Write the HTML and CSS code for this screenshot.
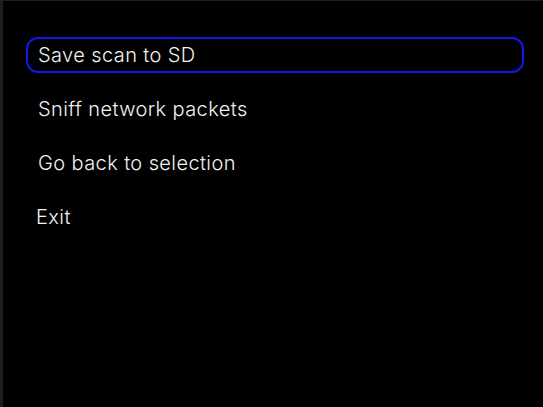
FILE: index.html
```html
<!DOCTYPE html>
<html lang="en">
<head>
    <meta charset="UTF-8">
    <meta name="viewport" content="width=device-width, initial-scale=1.0">
    <title>Scan Menu</title>
    <link rel="stylesheet" href="styles.css">
</head>
<body>
    <div class="screen">
        <ul class="menu">
            <li class="menu-item selected">Save scan to SD</li>
            <li class="menu-item">Sniff network packets</li>
            <li class="menu-item">Go back to selection</li>
            <li class="menu-item exit">Exit</li>
        </ul>
    </div>
</body>
</html>
```
FILE: styles.css
```css
* {
    margin: 0;
    padding: 0;
    box-sizing: border-box;
}

body {
    font-family: 'Inter', 'Noto Sans', sans-serif;
    height: 100vh;
    overflow: hidden;
    background: #1e1e1e;
}

.screen {
    height: 100vh;
    margin-left: 3px;
    margin-top: 1px;
    background: #000;
    padding: 36px 19px 0 23px;
}

.menu {
    list-style: none;
    display: flex;
    flex-direction: column;
    gap: 18px;
}

.menu-item {
    height: 36px;
    display: flex;
    align-items: center;
    padding: 0 10px;
    border: 2px solid transparent;
    border-radius: 12px;
    color: #f2f2f2;
    font-size: 20px;
    font-weight: 300;
    letter-spacing: 0.4px;
}

.menu-item.selected {
    border-color: #1414f0;
}

.menu-item.exit {
    padding-left: 8px;
}
```
